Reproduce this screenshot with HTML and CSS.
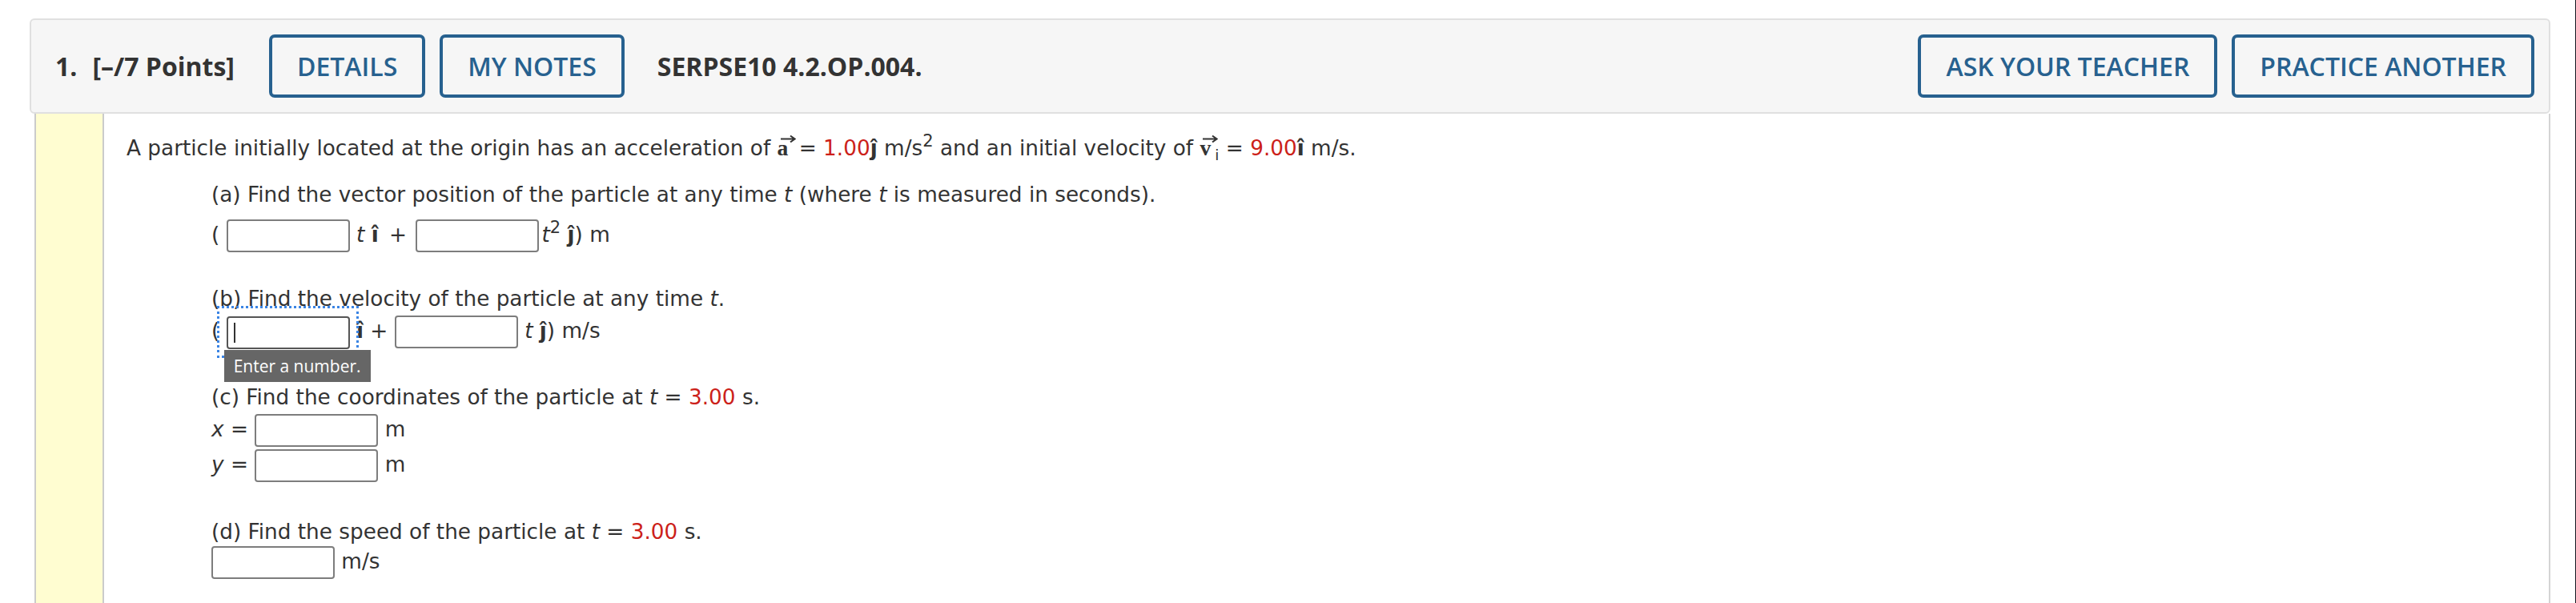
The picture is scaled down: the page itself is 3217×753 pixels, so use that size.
FILE: index.html
```html
<!DOCTYPE html>
<html lang="en">
<head>
<meta charset="utf-8">
<title>Question 1</title>
<link rel="stylesheet" href="styles.css">
</head>
<body>
<div class="question">
  <div class="qheader">
    <span class="qnum">1.</span>
    <span class="points">[–/7 Points]</span>
    <span class="btn btn-first">DETAILS</span>
    <span class="btn">MY NOTES</span>
    <span class="qcode">SERPSE10 4.2.OP.004.</span>
    <span class="spacer"></span>
    <span class="btn">ASK YOUR TEACHER</span>
    <span class="btn">PRACTICE ANOTHER</span>
  </div>
  <div class="qbody">
    <div class="gutter"></div>
    <div class="qcontent">
      <p class="intro">A particle initially located at the origin has an acceleration of <span class="vec">a<svg class="arrow" viewBox="0 0 20 10" aria-hidden="true"><path d="M1 5.5 H17.5 M13 1.5 L18.5 5.5 L13 9.5"/></svg></span> = <span class="red">1.00</span><b class="unit">ĵ</b> m/s<sup>2</sup> and an initial velocity of <span class="vec">v<svg class="arrow" viewBox="0 0 20 10" aria-hidden="true"><path d="M1 5.5 H17.5 M13 1.5 L18.5 5.5 L13 9.5"/></svg></span><sub>i</sub> = <span class="red">9.00</span><b class="unit">î</b> m/s.</p>

      <p class="prompt pa">(a) Find the vector position of the particle at any time <i>t</i> (where <i>t</i> is measured in seconds).</p>
      <div class="answer ra">( <span class="field"></span> <i>t</i> <b class="unit">î</b> <span class="plus">+</span> <span class="field"></span><i class="t2">t</i><sup>2</sup> <b class="unit">ĵ</b>) m</div>

      <p class="prompt pb">(b) Find the velocity of the particle at any time <i>t</i>.</p>
      <div class="answer rb">( <span class="fwrap"><span class="field focused"><span class="caret"></span></span><span class="focusring"></span><span class="tip">Enter a number.</span></span> <b class="unit">î</b> + <span class="field"></span> <i>t</i> <b class="unit">ĵ</b>) m/s</div>

      <p class="prompt pc">(c) Find the coordinates of the particle at <i>t</i> = <span class="red">3.00</span> s.</p>
      <div class="answer rc"><i>x</i> = <span class="field"></span> m</div>
      <div class="answer rc2"><i>y</i> = <span class="field"></span> m</div>

      <p class="prompt pd">(d) Find the speed of the particle at <i>t</i> = <span class="red">3.00</span> s.</p>
      <div class="answer rd"><span class="field"></span> m/s</div>
    </div>
  </div>
</div>
</body>
</html>
```
FILE: styles.css
```css
html, body {
  margin: 0;
  padding: 0;
}
body {
  background: #ffffff;
  font-family: "DejaVu Sans", Verdana, sans-serif;
  color: #333333;
  min-height: 100vh;
  border-right: 1px solid #15151f;
  box-sizing: border-box;
  overflow: hidden;
}
.question {
  margin: 23px 31px 0 37px;
}
.qheader {
  display: flex;
  align-items: center;
  height: 115px;
  border: 2px solid #e0e0e0;
  border-radius: 6px;
  background: #f6f6f6;
  padding: 0 18px 0 30px;
  font-family: "Open Sans", sans-serif;
  font-size: 32px;
  color: #333333;
}
.qnum {
  font-weight: 700;
  margin-right: 19px;
}
.points {
  font-weight: 700;
}
.btn {
  display: inline-flex;
  align-items: center;
  box-sizing: border-box;
  height: 79px;
  padding: 0 31px;
  margin-left: 18px;
  border: 4px solid #27618f;
  border-radius: 7px;
  color: #27618f;
  font-weight: 600;
  font-size: 32px;
  white-space: nowrap;
}
.btn-first {
  margin-left: 43px;
}
.qcode {
  font-weight: 700;
  margin-left: 41px;
}
.spacer {
  flex: 1;
}
.qbody {
  display: flex;
  margin-left: 6px;
  border-right: 2px solid #d4d4d4;
  min-height: 611px;
}
.gutter {
  width: 83px;
  flex: none;
  background: #fffdd1;
  border-left: 2px solid #cbcbcb;
  border-right: 2px solid #cbcbcb;
}
.qcontent {
  padding: 27px 0 0 28px;
  font-size: 26.3px;
  line-height: 32px;
}
.intro,
.prompt {
  margin: 0;
}
.red {
  color: #cc1f1a;
}
.unit {
  font-weight: 700;
}
i {
  font-style: italic;
}
sup {
  font-size: 0.8em;
  line-height: 0;
  vertical-align: 0.5em;
}
sub {
  font-size: 0.7em;
  line-height: 0;
  vertical-align: -0.35em;
}
.vec {
  position: relative;
  display: inline-block;
  padding-right: 5px;
  font-family: "Liberation Serif", "DejaVu Serif", serif;
  font-weight: 700;
  font-size: 1.05em;
  line-height: 1;
}
.arrow {
  position: absolute;
  left: 3px;
  top: -3px;
  width: 20px;
  height: 10px;
  fill: none;
  stroke: #333333;
  stroke-width: 2;
}
.prompt {
  padding-left: 106px;
}
.answer {
  padding-left: 106px;
  height: 41px;
  line-height: 41px;
  white-space: nowrap;
}
.plus {
  margin: 0 3px 0 5px;
}
.t2 {
  margin-left: 3px;
}
.field {
  display: inline-block;
  box-sizing: border-box;
  width: 154px;
  height: 41px;
  border: 2px solid #7d7d7d;
  border-radius: 4px;
  background: #ffffff;
  vertical-align: middle;
  position: relative;
}
.field.focused {
  border-color: #555555;
}
.caret {
  position: absolute;
  left: 7px;
  top: 6px;
  width: 2px;
  height: 25px;
  background: #333333;
}
.fwrap {
  position: relative;
  display: inline-block;
  vertical-align: middle;
  height: 41px;
}
.focusring {
  position: absolute;
  left: -12px;
  right: -11px;
  top: -12px;
  bottom: -12px;
  border: 3px dotted #3a84e4;
}
.tip {
  position: absolute;
  left: -3px;
  top: 43px;
  height: 40px;
  padding: 0 12px;
  background: #666666;
  color: #ffffff;
  font-family: "Open Sans", sans-serif;
  font-size: 21px;
  line-height: 40px;
  white-space: nowrap;
  z-index: 2;
}
.qcontent .pa { margin-top: 26px; }
.qcontent .ra { margin-top: 14px; }
.qcontent .pb { margin-top: 43px; }
.qcontent .rb { margin-top: 4px; }
.qcontent .pc { margin-top: 46px; }
.qcontent .rc { margin-top: 4px; }
.qcontent .rc2 { margin-top: 3px; }
.qcontent .pd { margin-top: 47px; }
.qcontent .rd { margin-top: 1px; }
```
